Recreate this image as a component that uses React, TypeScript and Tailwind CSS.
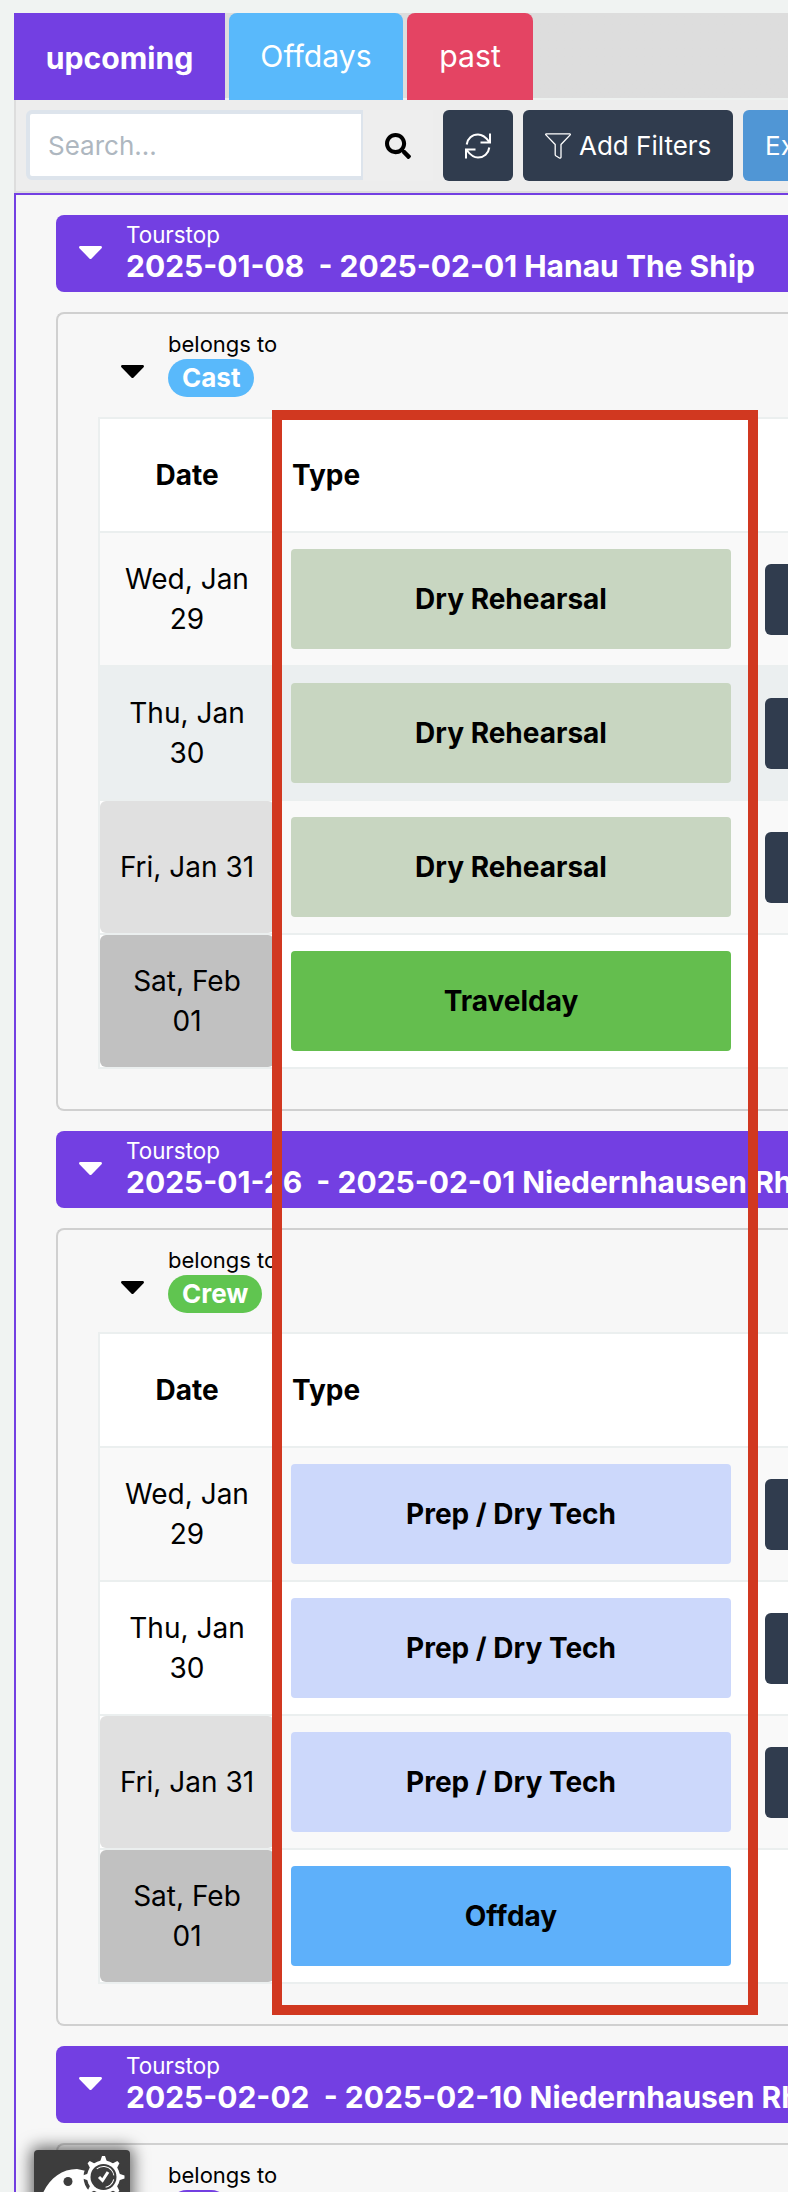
import React from "react";
import { FaSearch } from "react-icons/fa";

type Row = { date: string; type: string; color: string; dateColor?: string; rowColor: string; action?: boolean };

const rehearsal = "bg-[#c8d6c1]";
const prep = "bg-[#ccd8fb]";

const castRows: Row[] = [
  { date: "Wed, Jan 29", type: "Dry Rehearsal", color: rehearsal, rowColor: "bg-[#f9f9f9]", action: true },
  { date: "Thu, Jan 30", type: "Dry Rehearsal", color: rehearsal, rowColor: "bg-[#ebeff0]", action: true },
  { date: "Fri, Jan 31", type: "Dry Rehearsal", color: rehearsal, dateColor: "bg-[#e0e0e0]", rowColor: "bg-[#f9f9f9]", action: true },
  { date: "Sat, Feb 01", type: "Travelday", color: "bg-[#64be4e]", dateColor: "bg-[#c1c1c1]", rowColor: "bg-white" },
];

const crewRows: Row[] = [
  { date: "Wed, Jan 29", type: "Prep / Dry Tech", color: prep, rowColor: "bg-[#f9f9f9]", action: true },
  { date: "Thu, Jan 30", type: "Prep / Dry Tech", color: prep, rowColor: "bg-white", action: true },
  { date: "Fri, Jan 31", type: "Prep / Dry Tech", color: prep, dateColor: "bg-[#e0e0e0]", rowColor: "bg-[#f9f9f9]", action: true },
  { date: "Sat, Feb 01", type: "Offday", color: "bg-[#5eb0fa]", dateColor: "bg-[#c1c1c1]", rowColor: "bg-white" },
];

function Caret({ className }: { className: string }) {
  return (
    <svg viewBox="0 0 23 13" className={`h-[13px] w-[23px] shrink-0 ${className}`} fill="currentColor">
      <path d="M1.4 0H21.6C22.8 0 23.4 1.4 22.6 2.3L12.6 12.4C12 13.1 11 13.1 10.4 12.4L.4 2.3C-.4 1.4.2 0 1.4 0Z" />
    </svg>
  );
}

function TourstopBar({ title }: { title: string }) {
  return (
    <div className="flex h-[77px] shrink-0 overflow-hidden rounded-l-[8px] bg-[#733fe2] pl-[23px] whitespace-nowrap text-white">
      <Caret className="mt-[31px]" />
      <div className="ml-[24px] pt-[6px]">
        <div className="h-[28px] text-[22.4px] leading-[28px]">Tourstop</div>
        <div className="h-[34px] text-[30px] leading-[34px] font-bold">{title}</div>
      </div>
    </div>
  );
}

function GroupHeader({ name, color, className }: { name: string; color: string; className: string }) {
  return (
    <div className={`flex pl-[63px] ${className}`}>
      <Caret className="mt-[51px] text-black" />
      <div className="ml-[24px] pt-[16px]">
        <div className="h-[29px] text-[22px] leading-[28px]">belongs to</div>
        <div className={`inline-block h-[38px] rounded-full px-[14px] text-[26px] leading-[38px] font-bold text-white ${color}`}>{name}</div>
      </div>
    </div>
  );
}

function Schedule({ rows }: { rows: Row[] }) {
  return (
    <div className="ml-[40px] border-t-2 border-l-2 border-[#ebefef]">
      <div className="flex h-[114px] items-center border-b-2 border-[#ebefef] bg-white text-[28px] font-bold">
        <div className="w-[174px] text-center">Date</div>
        <div className="pl-[18px]">Type</div>
      </div>
      {rows.map((r) => (
        <div key={r.date} className={`flex h-[134px] border-b-2 border-[#ebefef] ${r.dateColor ? "bg-white" : r.rowColor}`}>
          <div className={`flex w-[174px] shrink-0 items-center justify-center rounded-[6px] px-[18px] text-center text-[28px] leading-[40px] ${r.dateColor ?? r.rowColor}`}>
            {r.date}
          </div>
          <div className={`flex flex-1 items-center pl-[17px] ${r.rowColor}`}>
            <div className={`flex h-[100px] w-[440px] shrink-0 items-center justify-center rounded-[4px] text-[28px] font-bold ${r.color}`}>{r.type}</div>
            {r.action && <div className="ml-[34px] h-[71px] flex-1 rounded-l-[6px] bg-[#303c4e]" />}
          </div>
        </div>
      ))}
    </div>
  );
}

function SettingsWidget() {
  return (
    <div className="absolute top-[2150px] left-[34px] h-[96px] w-[96px] rounded-[4px] bg-[#3d3d3d] shadow-[0_0_16px_3px_rgba(0,0,0,0.6)]">
      <svg viewBox="0 0 96 96" className="h-[96px] w-[96px]">
        <path d="M5 56C9 34 24 19 43 19L57 22L62 44L80 50V90H5Z" fill="#fff" />
        <circle cx="34" cy="31.500" r="4.500" fill="#3d3d3d" />
        <circle cx="69.500" cy="27" r="20" fill="#3d3d3d" />
        <g fill="#fff">
          <circle cx="69.500" cy="27" r="16.500" />
          {[0, 45, 90, 135, 180, 225, 270, 315].map((a) => (
            <path key={a} d="M66 12L68 6H71L73 12Z" transform={`rotate(${a} 69.500 27)`} />
          ))}
        </g>
        <circle cx="69.500" cy="27" r="13" fill="#3d3d3d" />
        <circle cx="69.500" cy="27" r="10.500" fill="none" stroke="#fff" strokeWidth="1" strokeDasharray="22 4 12 28" transform="rotate(-130 69.500 27)" />
        <path d="M65 27L68.500 30.500L74 22" fill="none" stroke="#fff" strokeWidth="3" />
      </svg>
    </div>
  );
}

export default function App() {
  return (
    <div className="relative h-[2192px] w-[788px] overflow-hidden bg-[#f0f3f2] pt-[13px] pl-[14px] font-['Inter',sans-serif] text-black">
      <div className="flex h-[87px] gap-[4px] bg-linear-to-b from-[#ddd] from-[85px] to-[#eef1f0] to-[85px] text-[30.2px] text-white">
        <div className="w-[211px] bg-[#733fe2] pt-[23px] text-center leading-[44px] font-bold">upcoming</div>
        <div className="w-[174px] rounded-t-[8px] bg-[#59b9fb] pt-[21px] text-center leading-[44px]">Offdays</div>
        <div className="w-[126px] rounded-t-[8px] bg-[#e44463] pt-[21px] text-center leading-[44px]">past</div>
      </div>

      <div className="flex h-[93px] border-b-2 border-l-2 border-[#ddd] bg-[#ededed] pt-[10px] pl-[10px] text-[26px] whitespace-nowrap">
        <div className="flex h-[70px] w-[337px] shrink-0 items-center rounded-l-[6px] border-4 border-r-2 border-[#dde4ec] bg-white pl-[18px] text-[#aeb7c0]">Search...</div>
        <div className="flex h-[71px] w-[70px] shrink-0 items-center justify-center bg-[#eee]">
          <FaSearch className="h-[26px] w-[26px]" />
        </div>
        <div className="ml-[10px] flex h-[71px] w-[70px] shrink-0 items-center justify-center rounded-[6px] bg-[#303c4e] text-white">
          <svg viewBox="0 0 26 26" className="h-[26px] w-[26px]" fill="none" stroke="currentColor" strokeWidth="2">
            <path d="M1.700 11.500C2.500 5.500 7 1.500 13 1.500C17.500 1.500 20.500 3.800 24 8.500M25 .500V9.500H15.500M24.300 14.500C23.500 20.500 19 24.500 13 24.500C8.500 24.500 5.500 22.200 2 17.500M1 25.500V16.500H10.500" />
          </svg>
        </div>
        <div className="ml-[10px] flex h-[71px] w-[210px] shrink-0 items-center rounded-[6px] bg-[#303c4e] pl-[22px] text-white">
          <svg viewBox="0 0 26 26" className="h-[26px] w-[26px] shrink-0" fill="none" stroke="currentColor" strokeWidth="1.300" strokeLinejoin="round">
            <path d="M1.200 .800H24.800C25.300 .800 25.500 1.500 25.200 1.900L16 11.500V24C16 25 15.200 25.500 14.400 25L10.800 22.700C10.400 22.400 10.200 22 10.200 21.500V11.500L.900 1.900C.500 1.500 .700 .800 1.200 .800Z" />
          </svg>
          <span className="ml-[8px]">Add Filters</span>
        </div>
        <div className="ml-[10px] flex h-[71px] w-[140px] shrink-0 items-center rounded-[6px] bg-[#5096d5] pl-[22px] text-white">Export</div>
      </div>

      <div className="flex h-[2100px] flex-col border-t-2 border-l-2 border-[#733fe2] bg-[#f7f7f7] pt-[20px] pl-[40px]">
        <TourstopBar title={"2025-01-08\u00a0 - 2025-02-01 Hanau The Ship"} />
        <div className="my-[20px] h-[799px] shrink-0 rounded-l-[8px] border-2 border-r-0 border-[#d0d0d0]">
          <GroupHeader name="Cast" color="bg-[#59b9fb]" className="h-[103px]" />
          <Schedule rows={castRows} />
        </div>
        <TourstopBar title={"2025-01-26\u00a0 - 2025-02-01 Niedernhausen Rhein"} />
        <div className="my-[20px] h-[798px] shrink-0 rounded-l-[8px] border-2 border-r-0 border-[#d0d0d0]">
          <GroupHeader name="Crew" color="bg-[#60c550]" className="h-[102px]" />
          <Schedule rows={crewRows} />
        </div>
        <TourstopBar title={"2025-02-02\u00a0 - 2025-02-10 Niedernhausen Rhein"} />
        <div className="mt-[20px] h-[798px] shrink-0 rounded-l-[8px] border-2 border-r-0 border-[#d0d0d0]">
          <GroupHeader name="All" color="bg-[#733fe2]" className="h-[102px]" />
        </div>
      </div>

      <div className="absolute top-[410px] left-[272px] h-[1605px] w-[486px] border-10 border-[#d13820]" />
      <SettingsWidget />
    </div>
  );
}
